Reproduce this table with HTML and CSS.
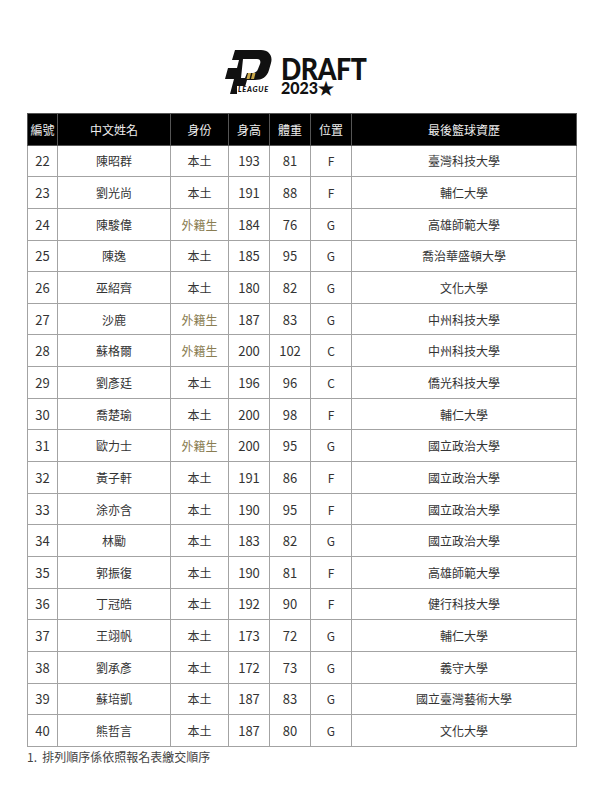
FILE: index.html
```html
<!DOCTYPE html>
<html lang="zh-Hant">
<head>
<meta charset="utf-8">
<link rel="stylesheet" href="styles.css">
</head>
<body>
<div class="page">
  <header class="brand">
    <div class="mark">
      <svg width="48" height="44" viewBox="0 0 48 44" xmlns="http://www.w3.org/2000/svg">
        <path d="M11 0 H37 C45 0 49 6 47 13 L45 20 C43 27 38 30 31 30 H23 L19 44 H6 L10 29 H1 L4 18 H13 L15 10 H8 Z" fill="#111"/>
        <path d="M19 9 H33 C36 9 37 11 36 14 L34 19 C33 22 31 23 28 23 H23 L21 28 H17 Z" fill="#fff"/>
        <path d="M24 23 L27 23 L25.5 29 L22.5 29 Z M28.5 23 L31.5 23 L30 29 L27 29 Z" fill="#c9a84a"/>
      </svg>
      <span class="league">LEAGUE</span>
    </div>
    <div class="words">
      <div class="draft">DRAFT</div>
      <div class="year">2023★</div>
    </div>
  </header>

  <table class="roster">
    <thead>
      <tr>
        <th class="c-no">編號</th>
        <th class="c-name">中文姓名</th>
        <th class="c-id">身份</th>
        <th class="c-h">身高</th>
        <th class="c-w">體重</th>
        <th class="c-p">位置</th>
        <th class="c-s">最後籃球資歷</th>
      </tr>
    </thead>
    <tbody>
      <tr><td>22</td><td>陳昭群</td><td>本土</td><td>193</td><td>81</td><td>F</td><td>臺灣科技大學</td></tr>
      <tr><td>23</td><td>劉光尚</td><td>本土</td><td>191</td><td>88</td><td>F</td><td>輔仁大學</td></tr>
      <tr><td>24</td><td>陳駿偉</td><td class="foreign">外籍生</td><td>184</td><td>76</td><td>G</td><td>高雄師範大學</td></tr>
      <tr><td>25</td><td>陳逸</td><td>本土</td><td>185</td><td>95</td><td>G</td><td>喬治華盛頓大學</td></tr>
      <tr><td>26</td><td>巫紹齊</td><td>本土</td><td>180</td><td>82</td><td>G</td><td>文化大學</td></tr>
      <tr><td>27</td><td>沙鹿</td><td class="foreign">外籍生</td><td>187</td><td>83</td><td>G</td><td>中州科技大學</td></tr>
      <tr><td>28</td><td>蘇格爾</td><td class="foreign">外籍生</td><td>200</td><td>102</td><td>C</td><td>中州科技大學</td></tr>
      <tr><td>29</td><td>劉彥廷</td><td>本土</td><td>196</td><td>96</td><td>C</td><td>僑光科技大學</td></tr>
      <tr><td>30</td><td>喬楚瑜</td><td>本土</td><td>200</td><td>98</td><td>F</td><td>輔仁大學</td></tr>
      <tr><td>31</td><td>歐力士</td><td class="foreign">外籍生</td><td>200</td><td>95</td><td>G</td><td>國立政治大學</td></tr>
      <tr><td>32</td><td>黃子軒</td><td>本土</td><td>191</td><td>86</td><td>F</td><td>國立政治大學</td></tr>
      <tr><td>33</td><td>涂亦含</td><td>本土</td><td>190</td><td>95</td><td>F</td><td>國立政治大學</td></tr>
      <tr><td>34</td><td>林勵</td><td>本土</td><td>183</td><td>82</td><td>G</td><td>國立政治大學</td></tr>
      <tr><td>35</td><td>郭振復</td><td>本土</td><td>190</td><td>81</td><td>F</td><td>高雄師範大學</td></tr>
      <tr><td>36</td><td>丁冠皓</td><td>本土</td><td>192</td><td>90</td><td>F</td><td>健行科技大學</td></tr>
      <tr><td>37</td><td>王翊帆</td><td>本土</td><td>173</td><td>72</td><td>G</td><td>輔仁大學</td></tr>
      <tr><td>38</td><td>劉承彥</td><td>本土</td><td>172</td><td>73</td><td>G</td><td>義守大學</td></tr>
      <tr><td>39</td><td>蘇培凱</td><td>本土</td><td>187</td><td>83</td><td>G</td><td>國立臺灣藝術大學</td></tr>
      <tr><td>40</td><td>熊哲言</td><td>本土</td><td>187</td><td>80</td><td>G</td><td>文化大學</td></tr>
    </tbody>
  </table>

  <p class="note">1.&nbsp;&nbsp;排列順序係依照報名表繳交順序</p>
</div>
</body>
</html>
```
FILE: styles.css
```css
* { box-sizing: border-box; }
body {
  margin: 0;
  background: #fff;
  font-family: "Noto Sans CJK TC", "Noto Sans", sans-serif;
  color: #333;
}
.page {
  padding: 47px 27px 0 27px;
}
.brand {
  display: flex;
  align-items: flex-start;
  gap: 9px;
  height: 66px;
  padding-left: 197px;
}
.mark {
  position: relative;
  width: 48px;
  height: 46px;
  margin-top: 3px;
}
.mark svg { display: block; }
.league {
  position: absolute;
  left: 13px;
  top: 36px;
  font-family: "Lato", sans-serif;
  font-weight: 900;
  font-style: italic;
  font-size: 7.5px;
  letter-spacing: 0.7px;
  color: #111;
  background: #fff;
  padding: 0 1px;
  line-height: 8px;
}
.words {
  display: flex;
  flex-direction: column;
  padding-top: 8px;
}
.draft {
  font-family: "Lato", sans-serif;
  font-weight: 900;
  font-size: 31px;
  line-height: 26px;
  letter-spacing: -0.5px;
  color: #111;
  transform: scaleX(0.86);
  transform-origin: left center;
}
.year {
  font-family: "Lato", sans-serif;
  font-weight: 900;
  font-size: 16px;
  line-height: 14px;
  margin-top: 0;
  color: #111;
}
.roster {
  width: 549px;
  border-collapse: collapse;
  table-layout: fixed;
  font-size: 12px;
}
.roster th, .roster td {
  height: 31.65px;
  padding: 0;
  text-align: center;
  vertical-align: middle;
  border: 1px solid #a3a3a3;
  white-space: nowrap;
}
.roster th {
  background: #000;
  color: #eee;
  font-weight: 400;
  border-color: #555;
}
.roster td:first-child { font-size: 13px; }
.roster td:nth-child(4), .roster td:nth-child(5) { font-size: 13px; }
.c-no { width: 30px; }
.c-name { width: 113px; }
.c-id { width: 58px; }
.c-h { width: 41px; }
.c-w { width: 41px; }
.c-p { width: 41px; }
.c-s { width: 225px; }
.foreign { color: #8a7d52; }
.note {
  margin: 1px 0 0 0;
  font-size: 12px;
  color: #444;
}
```
